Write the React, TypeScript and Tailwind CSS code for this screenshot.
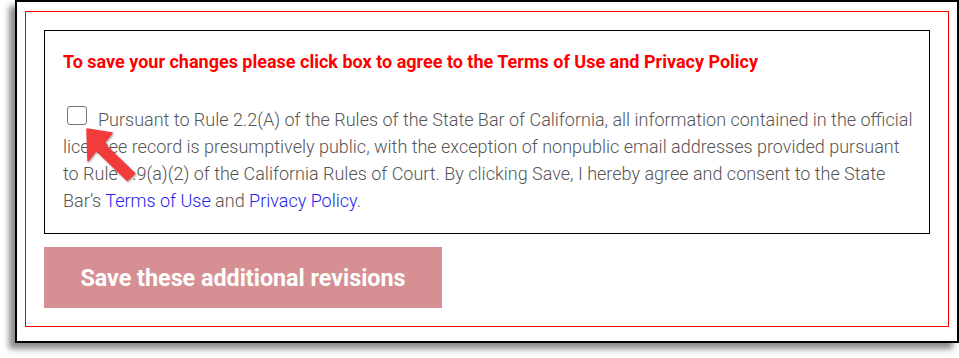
export default function App() {
  return (
    <div className="h-[358px] w-[959px] bg-white font-['Roboto',sans-serif]">
      <div className="ml-[15px] h-[343px] w-[944px] border-2 border-black bg-white pt-[9px] pr-[8px] pb-[14px] pl-[8px] shadow-[-6px_6px_6px_rgba(0,0,0,0.45)]">
        <div className="h-full border border-[#ff0000] p-[18px]">
          <div className="relative h-[204px] border border-black pt-[17px] pr-[12px] pl-[18px]">
            <p className="text-[18px] font-bold leading-[28px] text-[#ff0000]">
              To save your changes please click box to agree to the Terms of Use and Privacy Policy
            </p>
            <p className="mt-[30px] text-[18px] font-light leading-[27px] text-[#555]">
              <input
                type="checkbox"
                className="mr-[11px] ml-[4px] inline-block h-[19px] w-[20px] appearance-none rounded-[3px] border border-[#767676] bg-white align-[1px]"
              />
              Pursuant to Rule 2.2(A) of the Rules of the State Bar of California, all information contained in the official licensee record is presumptively public, with the exception of nonpublic email addresses provided pursuant to Rule 1.9(a)(2) of the California Rules of Court. By clicking Save, I hereby agree and consent to the State Bar&rsquo;s <a className="text-[#2222ee]">Terms of Use</a> and <a className="text-[#2222ee]">Privacy Policy</a>.
            </p>
            <svg
              className="absolute left-[35px] top-[90px] drop-shadow-[1px_1px_1px_rgba(0,0,0,0.35)]"
              width="62"
              height="66"
              viewBox="0 0 62 66"
            >
              <path
                d="M7 8 L32 12 L23.7 22.6 L54.7 52.6 L47.3 59.4 L16.3 29.4 L8 40 Z"
                fill="#f23c3c"
                stroke="#f23c3c"
                strokeWidth="1.5"
                strokeLinejoin="round"
              />
            </svg>
          </div>
          <button className="mt-[13px] h-[61px] w-[398px] bg-[#d69094] pt-[2px] text-[23.3px] font-bold text-white">
            Save these additional revisions
          </button>
        </div>
      </div>
    </div>
  )
}
